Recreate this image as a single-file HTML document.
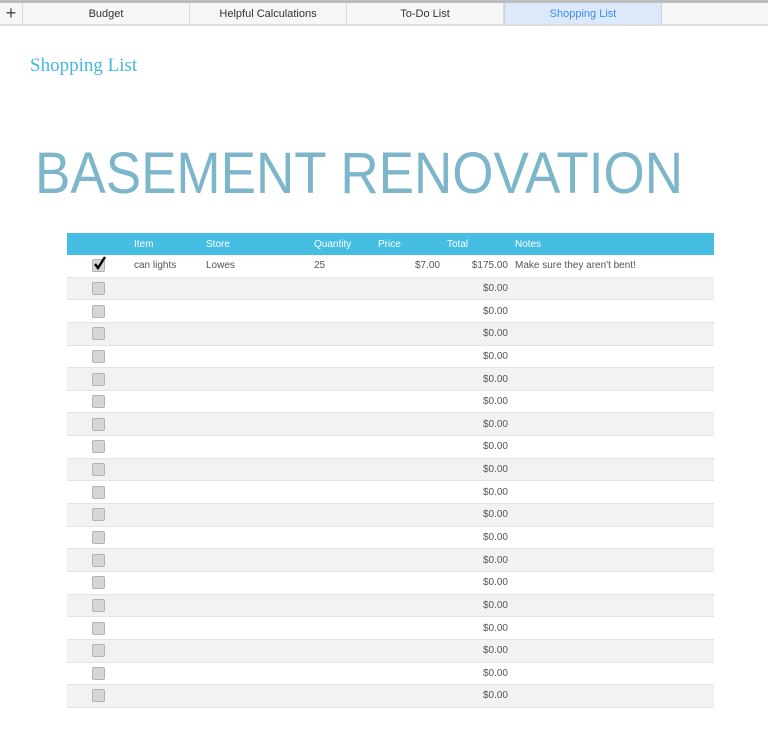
<!DOCTYPE html>
<html><head><meta charset="utf-8"><style>
body{margin:0;background:#fff;width:768px;height:743px;overflow:hidden;font-family:"Liberation Sans",sans-serif;position:relative}
.topline{position:absolute;left:0;top:0;width:768px;height:3px;background:#bdbdbd}
.tabs{position:absolute;left:0;top:3px;width:768px;height:21px;background:#f6f6f6;border-bottom:2px solid #dcdcdc}
.tab{position:absolute;top:0;height:21px;line-height:23px;text-align:center;font-size:11px;color:#333;border-right:1px solid #dadada}
.tab.sel{background:#dce9fb;color:#3b8ee6;border-right:1px solid #c6d3e4;border-left:1px solid #c6d3e4}
.sub{position:absolute;left:30px;top:55px;font-family:"Liberation Serif",serif;font-size:19px;color:#45b8dd}
table{position:absolute;left:67px;top:233px;width:647px;border-collapse:collapse;font-size:10px;color:#555}
th{background:#46bde2;color:#fff;font-weight:normal;height:22px;text-align:left;padding:0;font-size:10px}
td{height:21.65px;padding:0;border-bottom:1px solid #e4e4e4}
tr.g td{background:#f2f2f2}
.cb{display:inline-block;width:11px;height:11px;border:1px solid #b3b3b3;border-radius:2px;background:#d6d6d6;vertical-align:middle;position:relative}
.r{text-align:right;padding-right:7px}
</style></head><body>
<div class="topline"></div>
<div class="tabs">
<div class="tab" style="left:0;width:22px;font-size:18px;line-height:21px;color:#444">+</div>
<div class="tab" style="left:23px;width:166px">Budget</div>
<div class="tab" style="left:190px;width:156px">Helpful Calculations</div>
<div class="tab" style="left:347px;width:156px">To-Do List</div>
<div class="tab sel" style="left:504px;width:156px">Shopping List</div>
</div>
<div class="sub">Shopping List</div>
<svg style="position:absolute;left:0;top:130px" width="768" height="80"><text x="35" y="63" font-family="Liberation Sans, sans-serif" font-size="58" fill="#7db6ca" textLength="648" lengthAdjust="spacingAndGlyphs">BASEMENT RENOVATION</text></svg>
<table>
<tr><th style="width:67px"></th><th style="width:72px">Item</th><th style="width:108px">Store</th><th style="width:64px">Quantity</th><th style="width:69px">Price</th><th style="width:68px">Total</th><th>Notes</th></tr>
<tr><td style="padding-left:25px"><span class="cb"><svg style="position:absolute;left:0;top:-4px" width="14" height="14"><path d="M2 8 L5 12 L12 1" stroke="#000" stroke-width="2.4" fill="none"/></svg></span></td><td>can lights</td><td>Lowes</td><td>25</td><td class="r">$7.00</td><td class="r">$175.00</td><td>Make sure they aren't bent!</td></tr>
<tr class="g"><td style="padding-left:25px"><span class="cb"></span></td><td></td><td></td><td></td><td></td><td class="r">$0.00</td><td></td></tr>
<tr><td style="padding-left:25px"><span class="cb"></span></td><td></td><td></td><td></td><td></td><td class="r">$0.00</td><td></td></tr>
<tr class="g"><td style="padding-left:25px"><span class="cb"></span></td><td></td><td></td><td></td><td></td><td class="r">$0.00</td><td></td></tr>
<tr><td style="padding-left:25px"><span class="cb"></span></td><td></td><td></td><td></td><td></td><td class="r">$0.00</td><td></td></tr>
<tr class="g"><td style="padding-left:25px"><span class="cb"></span></td><td></td><td></td><td></td><td></td><td class="r">$0.00</td><td></td></tr>
<tr><td style="padding-left:25px"><span class="cb"></span></td><td></td><td></td><td></td><td></td><td class="r">$0.00</td><td></td></tr>
<tr class="g"><td style="padding-left:25px"><span class="cb"></span></td><td></td><td></td><td></td><td></td><td class="r">$0.00</td><td></td></tr>
<tr><td style="padding-left:25px"><span class="cb"></span></td><td></td><td></td><td></td><td></td><td class="r">$0.00</td><td></td></tr>
<tr class="g"><td style="padding-left:25px"><span class="cb"></span></td><td></td><td></td><td></td><td></td><td class="r">$0.00</td><td></td></tr>
<tr><td style="padding-left:25px"><span class="cb"></span></td><td></td><td></td><td></td><td></td><td class="r">$0.00</td><td></td></tr>
<tr class="g"><td style="padding-left:25px"><span class="cb"></span></td><td></td><td></td><td></td><td></td><td class="r">$0.00</td><td></td></tr>
<tr><td style="padding-left:25px"><span class="cb"></span></td><td></td><td></td><td></td><td></td><td class="r">$0.00</td><td></td></tr>
<tr class="g"><td style="padding-left:25px"><span class="cb"></span></td><td></td><td></td><td></td><td></td><td class="r">$0.00</td><td></td></tr>
<tr><td style="padding-left:25px"><span class="cb"></span></td><td></td><td></td><td></td><td></td><td class="r">$0.00</td><td></td></tr>
<tr class="g"><td style="padding-left:25px"><span class="cb"></span></td><td></td><td></td><td></td><td></td><td class="r">$0.00</td><td></td></tr>
<tr><td style="padding-left:25px"><span class="cb"></span></td><td></td><td></td><td></td><td></td><td class="r">$0.00</td><td></td></tr>
<tr class="g"><td style="padding-left:25px"><span class="cb"></span></td><td></td><td></td><td></td><td></td><td class="r">$0.00</td><td></td></tr>
<tr><td style="padding-left:25px"><span class="cb"></span></td><td></td><td></td><td></td><td></td><td class="r">$0.00</td><td></td></tr>
<tr class="g"><td style="padding-left:25px"><span class="cb"></span></td><td></td><td></td><td></td><td></td><td class="r">$0.00</td><td></td></tr>
</table>
</body></html>
